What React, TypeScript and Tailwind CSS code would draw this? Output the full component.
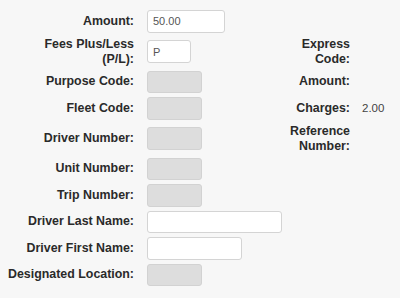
import React from "react";

type Row = {
  label: string;
  input: { width: string; value?: string; disabled?: boolean };
  sideLabel?: string;
  sideValue?: string;
};

const rows: Row[] = [
  { label: "Amount:", input: { width: "w-[78px]", value: "50.00" } },
  {
    label: "Fees Plus/Less (P/L):",
    input: { width: "w-[44px]", value: "P" },
    sideLabel: "Express Code:",
  },
  { label: "Purpose Code:", input: { width: "w-[55px]", disabled: true }, sideLabel: "Amount:" },
  {
    label: "Fleet Code:",
    input: { width: "w-[55px]", disabled: true },
    sideLabel: "Charges:",
    sideValue: "2.00",
  },
  {
    label: "Driver Number:",
    input: { width: "w-[55px]", disabled: true },
    sideLabel: "Reference Number:",
  },
  { label: "Unit Number:", input: { width: "w-[55px]", disabled: true } },
  { label: "Trip Number:", input: { width: "w-[55px]", disabled: true } },
  { label: "Driver Last Name:", input: { width: "w-[135px]" } },
  { label: "Driver First Name:", input: { width: "w-[95px]" } },
  { label: "Designated Location:", input: { width: "w-[55px]", disabled: true } },
];

// Text field, grey when locked
function Field({ width, value, disabled }: Row["input"]) {
  return (
    <input
      readOnly
      defaultValue={value}
      disabled={disabled}
      className={
        "block h-[22.5px] rounded-[3px] border px-[5px] text-[11px] text-[#555] outline-none " +
        width +
        (disabled
          ? " border-[#d2d2d2] bg-[#dddddd]"
          : " border-[#d4d4d4] bg-white")
      }
    />
  );
}

export default function App() {
  return (
    <div className="h-[298px] w-[400px] bg-[#f7f7f7] pt-[8px] font-['Liberation_Sans',Arial,sans-serif] text-[#2a2a2a]">
      <div className="grid grid-cols-[147px_135px_80px_1fr] items-center">
        {rows.map((row) => (
          <React.Fragment key={row.label}>
            <div className="py-[2px] pr-[13px] text-right text-[12.4px] font-bold leading-[15px]">
              {row.label.startsWith("Fees") ? (
                <>
                  Fees Plus/Less
                  <br />
                  (P/L):
                </>
              ) : (
                row.label
              )}
            </div>
            <div className="py-[2px]">
              <Field {...row.input} />
            </div>
            <div className="py-[2px] pr-[12px] text-right text-[12.4px] font-bold leading-[15px]">
              {row.sideLabel === "Express Code:" ? (
                <>
                  Express
                  <br />
                  Code:
                </>
              ) : row.sideLabel === "Reference Number:" ? (
                <>
                  Reference
                  <br />
                  Number:
                </>
              ) : (
                row.sideLabel
              )}
            </div>
            <div className="py-[2px] text-[11.5px] leading-[15px] text-[#444]">
              {row.sideValue}
            </div>
          </React.Fragment>
        ))}
      </div>
    </div>
  );
}
